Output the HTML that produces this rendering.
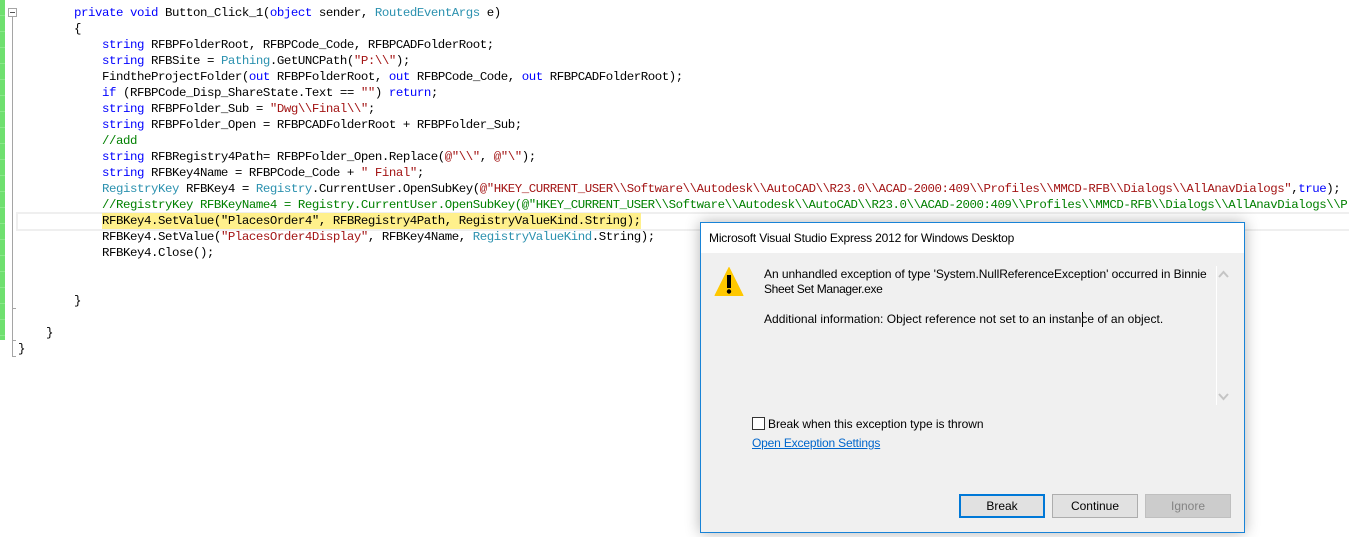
<!DOCTYPE html>
<html><head><meta charset="utf-8">
<style>
html,body{margin:0;padding:0;background:#fff;width:1349px;height:537px;overflow:hidden}
.a{position:absolute;white-space:pre}
.c{font:12.4px/16px "Liberation Mono",monospace;letter-spacing:-.44px;color:#000;left:0}
.k{color:#0000ff}.t{color:#2b91af}.s{color:#a31515}.g{color:#008000}
.d{font:12px/16px "Liberation Sans",sans-serif;color:#000}
.b{position:absolute;top:494px;width:86px;height:24px;box-sizing:border-box;background:#e1e1e1;border:1px solid #adadad;font:12px/22px "Liberation Sans",sans-serif;text-align:center;color:#000}
</style></head><body>
<div class="a" style="left:0;top:0;width:5px;height:340px;background:repeating-linear-gradient(to bottom,#6fe06f 0,#6fe06f 15px,#8ae88a 15px,#8ae88a 16px)"></div>
<div class="a" style="left:12px;top:16px;width:1px;height:340px;background:#a5a5a5"></div>
<div class="a" style="left:8px;top:8px;width:7px;height:7px;border:1px solid #a5a5a5;background:#fff"></div>
<div class="a" style="left:10px;top:12px;width:5px;height:1px;background:#555"></div>
<div class="a" style="left:12px;top:308px;width:4px;height:1px;background:#a5a5a5"></div>
<div class="a" style="left:12px;top:340px;width:4px;height:1px;background:#a5a5a5"></div>
<div class="a" style="left:12px;top:356px;width:4px;height:1px;background:#a5a5a5"></div>
<div class="a" style="left:16px;top:212px;width:1333px;height:15px;border:2px solid #efefef;border-right:0;box-sizing:content-box"></div>
<div class="a" style="left:102px;top:213px;width:539px;height:16px;background:#fff08c"></div>

<div class="a c" style="left:74px;top:5px"><span class="k">private</span> <span class="k">void</span> Button_Click_1(<span class="k">object</span> sender, <span class="t">RoutedEventArgs</span> e)</div>
<div class="a c" style="left:74px;top:21px">{</div>
<div class="a c" style="left:102px;top:37px"><span class="k">string</span> RFBPFolderRoot, RFBPCode_Code, RFBPCADFolderRoot;</div>
<div class="a c" style="left:102px;top:53px"><span class="k">string</span> RFBSite = <span class="t">Pathing</span>.GetUNCPath(<span class="s">"P:\\"</span>);</div>
<div class="a c" style="left:102px;top:69px">FindtheProjectFolder(<span class="k">out</span> RFBPFolderRoot, <span class="k">out</span> RFBPCode_Code, <span class="k">out</span> RFBPCADFolderRoot);</div>
<div class="a c" style="left:102px;top:85px"><span class="k">if</span> (RFBPCode_Disp_ShareState.Text == <span class="s">""</span>) <span class="k">return</span>;</div>
<div class="a c" style="left:102px;top:101px"><span class="k">string</span> RFBPFolder_Sub = <span class="s">"Dwg\\Final\\"</span>;</div>
<div class="a c" style="left:102px;top:117px"><span class="k">string</span> RFBPFolder_Open = RFBPCADFolderRoot + RFBPFolder_Sub;</div>
<div class="a c g" style="left:102px;top:133px">//add</div>
<div class="a c" style="left:102px;top:149px"><span class="k">string</span> RFBRegistry4Path= RFBPFolder_Open.Replace(<span class="s">@"\\"</span>, <span class="s">@"\"</span>);</div>
<div class="a c" style="left:102px;top:165px"><span class="k">string</span> RFBKey4Name = RFBPCode_Code + <span class="s">" Final"</span>;</div>
<div class="a c" style="left:102px;top:181px"><span class="t">RegistryKey</span> RFBKey4 = <span class="t">Registry</span>.CurrentUser.OpenSubKey(<span class="s">@"HKEY_CURRENT_USER\\Software\\Autodesk\\AutoCAD\\R23.0\\ACAD-2000:409\\Profiles\\MMCD-RFB\\Dialogs\\AllAnavDialogs"</span>,<span class="k">true</span>);</div>
<div class="a c g" style="left:102px;top:197px">//RegistryKey RFBKeyName4 = Registry.CurrentUser.OpenSubKey(@"HKEY_CURRENT_USER\\Software\\Autodesk\\AutoCAD\\R23.0\\ACAD-2000:409\\Profiles\\MMCD-RFB\\Dialogs\\AllAnavDialogs\\P</div>
<div class="a c" style="left:102px;top:213px">RFBKey4.SetValue("PlacesOrder4", RFBRegistry4Path, RegistryValueKind.String);</div>
<div class="a c" style="left:102px;top:229px">RFBKey4.SetValue(<span class="s">"PlacesOrder4Display"</span>, RFBKey4Name, <span class="t">RegistryValueKind</span>.String);</div>
<div class="a c" style="left:102px;top:245px">RFBKey4.Close();</div>
<div class="a c" style="left:74px;top:293px">}</div>
<div class="a c" style="left:46px;top:325px">}</div>
<div class="a c" style="left:18px;top:341px">}</div>

<div class="a" style="left:700px;top:222px;width:545px;height:311px;box-sizing:border-box;border:1px solid #1883d7;background:#f0f0f0;box-shadow:0 0 14px rgba(0,0,0,.3)"></div>
<div class="a" style="left:701px;top:223px;width:543px;height:30px;background:#fff"></div>
<div class="a d" style="left:709px;top:230px;letter-spacing:-.18px">Microsoft Visual Studio Express 2012 for Windows Desktop</div>

<svg class="a" style="left:714px;top:266px" width="30" height="31" viewBox="0 0 30 31">
<path d="M15 1.5 L29 29.5 L1 29.5 Z" fill="#ffc800" stroke="#ffc800" stroke-width="1" stroke-linejoin="round"/>
<rect x="13" y="9" width="4" height="13" fill="#000"/>
<circle cx="15" cy="25.5" r="2.2" fill="#000"/>
</svg>

<div class="a d" style="left:764px;top:266px;letter-spacing:-.06px">An unhandled exception of type 'System.NullReferenceException' occurred in Binnie</div>
<div class="a d" style="left:764px;top:281px;letter-spacing:-.33px">Sheet Set Manager.exe</div>
<div class="a d" style="left:764px;top:311px;letter-spacing:.03px">Additional information: Object reference not set to an instance of an object.</div>
<div class="a" style="left:1082px;top:312px;width:1px;height:15px;background:#000"></div>

<div class="a" style="left:1216px;top:266px;width:1px;height:139px;background:#fff"></div>
<svg class="a" style="left:1218px;top:270px" width="11" height="9" viewBox="0 0 11 9"><path d="M1 7 L5.5 2 L10 7" fill="none" stroke="#c4c4c4" stroke-width="2"/></svg>
<svg class="a" style="left:1218px;top:392px" width="11" height="9" viewBox="0 0 11 9"><path d="M1 2 L5.5 7 L10 2" fill="none" stroke="#c4c4c4" stroke-width="2"/></svg>

<div class="a" style="left:752px;top:417px;width:13px;height:13px;box-sizing:border-box;border:1px solid #333;background:#fff"></div>
<div class="a d" style="left:768px;top:416px;letter-spacing:-.05px">Break when this exception type is thrown</div>
<div class="a d" style="left:752px;top:435px;color:#0066cc;text-decoration:underline;letter-spacing:-.17px">Open Exception Settings</div>

<div class="b" style="left:959px;border:2px solid #0078d7;line-height:20px">Break</div>
<div class="b" style="left:1052px">Continue</div>
<div class="b" style="left:1145px;background:#ccc;border-color:#bfbfbf;color:#838383">Ignore</div>
</body></html>
